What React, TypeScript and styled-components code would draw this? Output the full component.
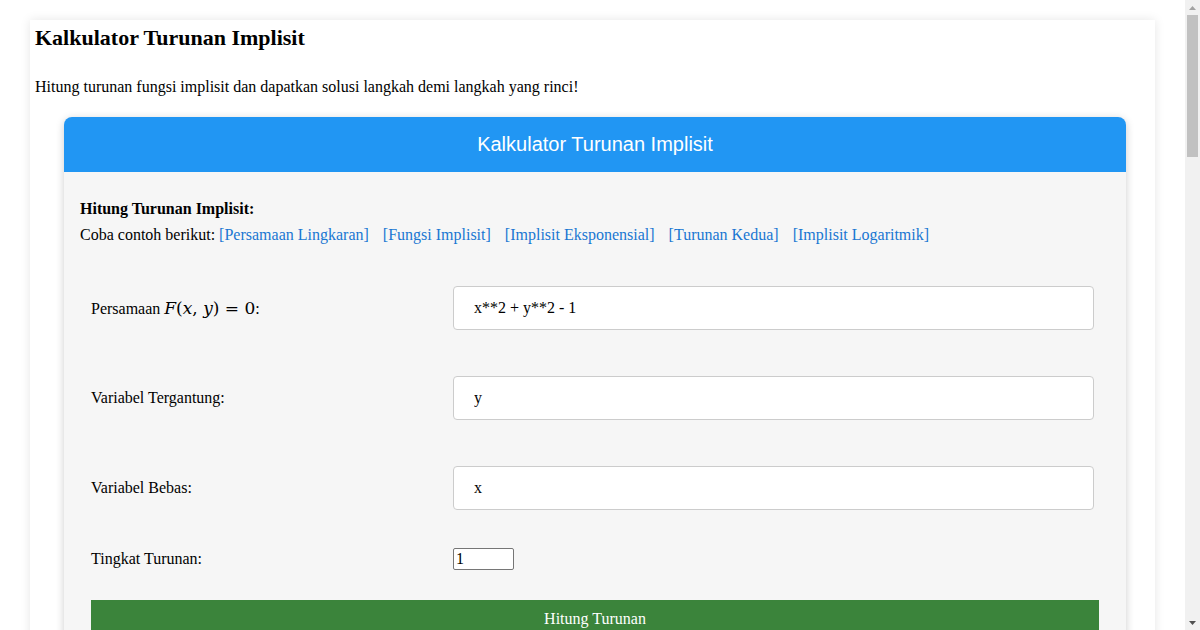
import React from "react";
import styled, { createGlobalStyle } from "styled-components";

const Global = createGlobalStyle`
  html, body { height: 100%; overflow: hidden; }
  body {
    margin: 0;
    background: #ffffff;
    font-family: "Liberation Serif", "Times New Roman", serif;
    font-size: 16px;
    color: #000;
  }
`;

const Shell = styled.div`
  display: flex;
  height: 100vh;
`;

const Main = styled.div`
  flex: 1;
  min-width: 0;
  overflow: hidden;
`;

const Rail = styled.div`
  width: 15px;
  flex: none;
  background: #f1f1f1;
  display: flex;
  flex-direction: column;
`;

const RailButton = styled.div`
  height: 15px;
  display: flex;
  align-items: center;
  justify-content: center;
`;

const Thumb = styled.div`
  height: 142px;
  margin: 0 2px;
  background: #c1c1c1;
`;

const RailSpace = styled.div`
  flex: 1;
`;

const Page = styled.div`
  width: 1125px;
  min-height: 2642px;
  margin: 20px auto 0;
  padding: 5px 5px 40px;
  box-sizing: border-box;
  background: #fff;
  box-shadow: 0 0 10px rgba(0, 0, 0, 0.1);
`;

const Title = styled.h2`
  margin: 0 0 27px;
  font-size: 22px;
  font-weight: bold;
`;

const Intro = styled.p`
  margin: 0;
  line-height: 18px;
`;

const Card = styled.div`
  width: 1062px;
  margin: 21px 0 0 29px;
  border-radius: 8px;
  overflow: hidden;
  background: #f6f6f6;
  box-shadow: 0 2px 8px rgba(0, 0, 0, 0.2);
`;

const CardHeader = styled.div`
  background: #2196f3;
  color: #fff;
  font-family: "Liberation Sans", Arial, sans-serif;
  font-size: 20px;
  text-align: center;
  height: 55px;
  display: flex;
  align-items: center;
  justify-content: center;
`;

const CardBody = styled.div`
  padding: 24px 16px 40px;
`;

const Examples = styled.div`
  line-height: 1.6;
`;

const ExampleLink = styled.a`
  color: #1976d2;
  text-decoration: none;
  margin-right: 10px;
  cursor: pointer;
`;

const Form = styled.div`
  margin: 16px 11px 0;
  display: flex;
  flex-direction: column;
`;

const Row = styled.div<{ $h: number }>`
  display: grid;
  grid-template-columns: 362px 1fr;
  align-items: center;
  height: ${(p) => p.$h}px;
`;

const Label = styled.label`
  font-size: 16px;
`;

const Math = styled.span`
  font-family: "DejaVu Serif", "Liberation Serif", serif;
  font-size: 17px;
  i {
    font-style: italic;
  }
`;

const TextInput = styled.input`
  width: 641px;
  height: 44px;
  box-sizing: border-box;
  border: 1px solid #ccc;
  border-radius: 4px;
  background: #fff;
  padding: 0 20px;
  font-family: "Liberation Serif", "Times New Roman", serif;
  font-size: 16px;
  color: #000;
  outline: none;
`;

const SmallInput = styled.input`
  width: 61px;
  height: 22px;
  box-sizing: border-box;
  border: 1px solid #767676;
  border-radius: 2px;
  padding: 1px 2px;
  font-family: "Liberation Serif", "Times New Roman", serif;
  font-size: 16px;
  background: #fff;
  &::-webkit-inner-spin-button,
  &::-webkit-outer-spin-button {
    -webkit-appearance: none;
    margin: 0;
  }
  -moz-appearance: textfield;
`;

const SubmitButton = styled.button`
  margin-top: 15px;
  width: 100%;
  border: none;
  background: #3b843b;
  color: #fff;
  font-family: "Liberation Serif", "Times New Roman", serif;
  font-size: 16px;
  padding: 10px 0;
  cursor: pointer;
`;

const Article = styled.div`
  margin-top: 40px;
  line-height: 1.6;
  p {
    margin: 0 0 16px;
  }
`;

const examples = [
  "[Persamaan Lingkaran]",
  "[Fungsi Implisit]",
  "[Implisit Eksponensial]",
  "[Turunan Kedua]",
  "[Implisit Logaritmik]",
];

export default function App() {
  return (
    <>
      <Global />
      <Shell>
        <Main>
          <Page>
            <Title>Kalkulator Turunan Implisit</Title>
            <Intro>Hitung turunan fungsi implisit dan dapatkan solusi langkah demi langkah yang rinci!</Intro>
            <Card>
              <CardHeader>Kalkulator Turunan Implisit</CardHeader>
              <CardBody>
                <Examples>
                  <b>Hitung Turunan Implisit:</b>
                  <br />
                  Coba contoh berikut:{" "}
                  {examples.map((e) => (
                    <React.Fragment key={e}>
                      <ExampleLink>{e}</ExampleLink>{" "}
                    </React.Fragment>
                  ))}
                </Examples>
                <Form>
                  <Row $h={90}>
                    <Label>
                      Persamaan{" "}
                      <Math>
                        <i>F</i>(<i>x</i>, <i>y</i>) = 0
                      </Math>
                      :
                    </Label>
                    <TextInput defaultValue="x**2 + y**2 - 1" />
                  </Row>
                  <Row $h={90}>
                    <Label>Variabel Tergantung:</Label>
                    <TextInput defaultValue="y" />
                  </Row>
                  <Row $h={90}>
                    <Label>Variabel Bebas:</Label>
                    <TextInput defaultValue="x" />
                  </Row>
                  <Row $h={52}>
                    <Label>Tingkat Turunan:</Label>
                    <SmallInput type="number" defaultValue={1} />
                  </Row>
                  <SubmitButton>Hitung Turunan</SubmitButton>
                </Form>
              </CardBody>
            </Card>
            <Article>
              <p>
                Turunan implisit digunakan ketika suatu fungsi tidak dinyatakan secara eksplisit dalam bentuk y =
                f(x), melainkan melalui persamaan F(x, y) = 0. Kalkulator ini menurunkan kedua ruas persamaan
                terhadap variabel bebas dan menyelesaikan turunan variabel tergantung.
              </p>
            </Article>
          </Page>
        </Main>
        <Rail>
          <RailButton>
            <svg width="7" height="4" viewBox="0 0 7 4">
              <path d="M0 4 L3.5 0 L7 4 Z" fill="#a3a3a3" />
            </svg>
          </RailButton>
          <Thumb />
          <RailSpace />
          <RailButton>
            <svg width="7" height="4" viewBox="0 0 7 4">
              <path d="M0 0 L3.5 4 L7 0 Z" fill="#505050" />
            </svg>
          </RailButton>
        </Rail>
      </Shell>
    </>
  );
}
